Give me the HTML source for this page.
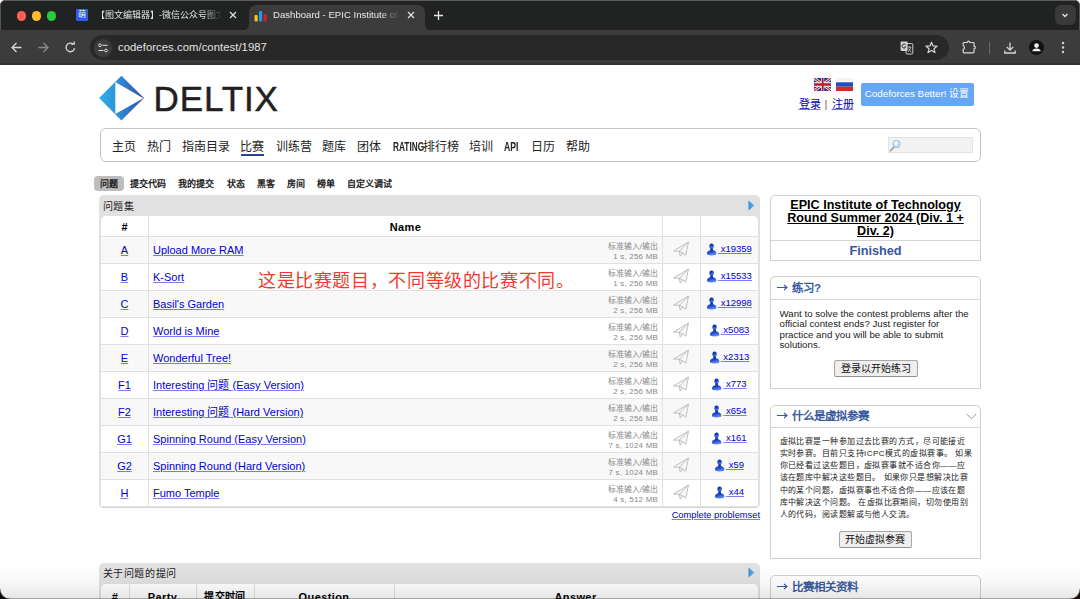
<!DOCTYPE html>
<html lang="zh-CN"><head><meta charset="utf-8">
<style>
*{box-sizing:border-box;margin:0;padding:0}
html,body{width:1080px;height:599px;overflow:hidden;background:#fff;font-family:"Liberation Sans",sans-serif}
.abs{position:absolute}
#chrome{position:absolute;left:0;top:0;width:1080px;height:65px;background:#202322;border-top:1px solid #5c5c5c;border-left:1px solid #555;border-right:1px solid #555;border-radius:5px 5px 0 0}
#toolbar{position:absolute;left:0;top:30px;width:1080px;height:36px;background:#3c3c3c;border-bottom:1px solid #7d7d7d;box-shadow:inset 0 -2px 0 #333}
.dot{position:absolute;top:10px;width:9.5px;height:9.5px;border-radius:50%}
#page{position:absolute;left:0;top:65px;width:1080px;height:534px;background:#fff;overflow:hidden}
a{color:#0000d4;text-decoration:underline;text-decoration-color:rgba(40,40,220,0.6)}
.tabtitle{font-size:9.6px;line-height:14px;white-space:nowrap;overflow:hidden}
/*PAGECSS*/
.nav>span{position:absolute;white-space:nowrap}
.nav{font-size:12px;line-height:14px;color:#222;left:0;top:0}
.cond{display:inline-block;transform:scaleX(0.66);transform-origin:0 50%;white-space:nowrap;overflow:visible}
.menu2 span{position:absolute;white-space:nowrap}
.menu2{font-size:9px;line-height:12px;font-weight:bold;color:#222;left:0}
.prow{position:absolute;left:101px;width:656.5px;height:27px;border-top:1px solid #e1e1e1}
.prow>div{position:absolute;top:0;height:26px}
.pid{left:0;width:47px;text-align:center;font-size:11px;line-height:26px}
.pname{left:52px;width:500px;font-size:11px;line-height:26px;white-space:nowrap}
.plim{left:480px;width:77px;text-align:right;color:#888;font-size:7.9px;line-height:9.8px;padding-top:5px;white-space:nowrap}
.l2{letter-spacing:0.25px}
.pplane{left:571px;width:18px;top:4px !important}
.pcnt{left:599px;width:58px;text-align:center;font-size:9.5px;line-height:23px;white-space:nowrap}
.uic{display:inline-block;vertical-align:middle;position:relative;top:3px;margin-right:1px}
.phead>div{position:absolute;top:0.8px;height:20px;line-height:20px;text-align:center;font-size:11px;color:#000;letter-spacing:0.4px}
.phead{left:0}
.vline{width:1px;background:#e1e1e1}
.sbox{left:770px;width:211px;border:1px solid #cfcfcf;border-radius:5px 5px 0 0;background:#fff}
.stitle{left:777px;font-size:11.5px;line-height:14px;font-weight:bold;color:#3b5a9e;white-space:nowrap}
.btn{background:#efefef;border:1px solid #a6a6a6;border-bottom-color:#8f8f8f;border-radius:2.5px;font-size:10px;line-height:15.4px;text-align:center;color:#111;white-space:nowrap}
/*ENDPAGECSS*/</style></head><body>
<div id="chrome">
  <div class="dot" style="left:15.5px;background:#fe5f57"></div>
  <div class="dot" style="left:30.5px;background:#febc2e"></div>
  <div class="dot" style="left:45.5px;background:#28c840"></div>
  <!-- inactive tab -->
  <div class="abs" style="left:74.5px;top:7.5px;width:12px;height:12px;background:#2f5bf0;border-radius:1px;color:#fff;font-size:8px;line-height:12px;text-align:center">萌</div>
  <div class="abs tabtitle" style="left:95px;top:6.5px;width:126px;font-size:9px;color:#e2e2e2;-webkit-mask-image:linear-gradient(90deg,#000 85%,transparent)">【图文编辑器】-微信公众号图文</div>
  <svg class="abs" style="left:227px;top:8.5px" width="10" height="10" viewBox="0 0 10 10"><path d="M2 2L8 8M8 2L2 8" stroke="#e3e3e3" stroke-width="1.2"/></svg>
  <!-- active tab -->
  <svg class="abs" style="left:239.5px;top:4px" width="192" height="26" viewBox="0 0 192 26"><path d="M0 26 Q8 26 8 18 L8 8 Q8 0 16 0 L176 0 Q184 0 184 8 L184 18 Q184 26 192 26 Z" fill="#3c3c3c"/></svg>
  <svg class="abs" style="left:253px;top:8.5px" width="14" height="12" viewBox="0 0 14 12"><rect x="0.5" y="5" width="3.2" height="6.5" rx="0.8" fill="#f5c518"/><rect x="5" y="1" width="3.2" height="10.5" rx="0.8" fill="#1e9ae6"/><rect x="9.5" y="4" width="3.2" height="7.5" rx="0.8" fill="#d3202a"/></svg>
  <div class="abs tabtitle" style="left:272px;top:7px;width:126px;color:#e8e8e8;-webkit-mask-image:linear-gradient(90deg,#000 86%,transparent 100%)">Dashboard - EPIC Institute of</div>
  <svg class="abs" style="left:405px;top:9px" width="10" height="10" viewBox="0 0 10 10"><path d="M2 2L8 8M8 2L2 8" stroke="#e3e3e3" stroke-width="1.2"/></svg>
  <svg class="abs" style="left:431.5px;top:8.5px" width="11" height="11" viewBox="0 0 11 11"><path d="M5.5 1V10M1 5.5H10" stroke="#e3e3e3" stroke-width="1.3"/></svg>
  <!-- tab list button -->
  <div class="abs" style="left:1054px;top:3.5px;width:20.5px;height:20.5px;border-radius:6px;background:#3a3a3a"></div>
  <svg class="abs" style="left:1059px;top:9px" width="10" height="10" viewBox="0 0 10 10"><path d="M2.5 4L5 6.5L7.5 4" stroke="#e3e3e3" stroke-width="1.3" fill="none"/></svg>
</div>
<div id="toolbar">
  <svg class="abs" style="left:10px;top:11px" width="13" height="13" viewBox="0 0 13 13"><path d="M11.5 6.5H2M6.5 2L2 6.5L6.5 11" stroke="#d6d6d6" stroke-width="1.3" fill="none"/></svg>
  <svg class="abs" style="left:37px;top:11px" width="13" height="13" viewBox="0 0 13 13"><path d="M1.5 6.5H11M6.5 2L11 6.5L6.5 11" stroke="#8a8a8a" stroke-width="1.3" fill="none"/></svg>
  <svg class="abs" style="left:64px;top:11px" width="13" height="13" viewBox="0 0 13 13"><path d="M10.6 7.2A4.3 4.3 0 1 1 9.3 3.3" stroke="#d6d6d6" stroke-width="1.3" fill="none"/><path d="M7.2 3.2H10.2V0.4" stroke="#d6d6d6" stroke-width="1.3" fill="none"/></svg>
  <div class="abs" style="left:90px;top:5px;width:858.5px;height:25px;border-radius:12.5px;background:#282828"></div>
  <div class="abs" style="left:94px;top:9px;width:17.5px;height:17.5px;border-radius:50%;background:#3c3c3c"></div>
  <svg class="abs" style="left:97px;top:12px" width="12" height="12" viewBox="0 0 12 12"><circle cx="3" cy="3.3" r="1.4" stroke="#d6d6d6" stroke-width="1" fill="none"/><path d="M5.5 3.3H10.5" stroke="#d6d6d6" stroke-width="1.1"/><circle cx="9" cy="8.5" r="1.4" stroke="#d6d6d6" stroke-width="1" fill="none"/><path d="M1.5 8.5H6.5" stroke="#d6d6d6" stroke-width="1.1"/></svg>
  <div class="abs" style="left:118px;top:10px;font-size:11.3px;line-height:15px;color:#e3e3e3;letter-spacing:0.05px">codeforces.com/contest/1987</div>
  <!-- translate -->
  <svg class="abs" style="left:900px;top:11px" width="14" height="14" viewBox="0 0 14 14"><rect x="6" y="2.6" width="6.8" height="10.4" rx="1" fill="#282828" stroke="#cfcfcf" stroke-width="1"/><path d="M7.8 6.2H11.2M9.5 5.2V6.2M10.8 6.2Q10 9.5 7.8 11M8.6 7.6Q9.6 10 11.4 11" stroke="#cfcfcf" stroke-width="0.8" fill="none"/><rect x="0.6" y="0.4" width="7" height="9.6" rx="1" fill="#d4d4d4"/><path d="M5.6 3.8A2 2 0 1 0 5.8 6H4.3" stroke="#2a2a2a" stroke-width="1" fill="none"/></svg>
  <svg class="abs" style="left:924.5px;top:11px" width="13" height="13" viewBox="0 0 13 13"><path d="M6.5 1.2L8 5L12 5.2L8.9 7.7L10 11.6L6.5 9.4L3 11.6L4.1 7.7L1 5.2L5 5Z" stroke="#d6d6d6" stroke-width="1.2" fill="none" stroke-linejoin="round"/></svg>
  <svg class="abs" style="left:961px;top:10px" width="16" height="15" viewBox="0 0 16 15"><path d="M3 2.5H6.2A1.3 1.3 0 0 1 8.8 2.5H12.2Q13 2.5 13 3.3V6.2A1.3 1.3 0 0 1 13 8.8V12Q13 12.8 12.2 12.8H3Q2.2 12.8 2.2 12V9.4A1.9 1.9 0 0 0 2.2 5.8V3.3Q2.2 2.5 3 2.5Z" stroke="#d6d6d6" stroke-width="1.2" fill="none" stroke-linejoin="round"/></svg>
  <div class="abs" style="left:988.5px;top:12px;width:1px;height:12px;background:#6a6a6a"></div>
  <svg class="abs" style="left:1002.5px;top:10.5px" width="14" height="14" viewBox="0 0 14 14"><path d="M7 1.5V9M3.8 6L7 9.2L10.2 6" stroke="#d6d6d6" stroke-width="1.3" fill="none"/><path d="M1.8 9.5V12H12.2V9.5" stroke="#d6d6d6" stroke-width="1.3" fill="none"/></svg>
  <div class="abs" style="left:1029px;top:10px;width:15px;height:15px;border-radius:50%;background:#121212"></div>
  <svg class="abs" style="left:1029px;top:10px" width="15" height="15" viewBox="0 0 15 15"><circle cx="7.5" cy="5.6" r="2.3" fill="#f0f0f0"/><path d="M3.3 11.3Q3.6 8.6 7.5 8.6Q11.4 8.6 11.7 11.3Z" fill="#f0f0f0"/></svg>
  <svg class="abs" style="left:1060px;top:10px" width="6" height="15" viewBox="0 0 6 15"><circle cx="3" cy="3" r="1.2" fill="#d6d6d6"/><circle cx="3" cy="7.5" r="1.2" fill="#d6d6d6"/><circle cx="3" cy="12" r="1.2" fill="#d6d6d6"/></svg>
</div>
<div id="page"></div>

<!-- header -->
<svg class="abs" style="left:98px;top:75px" width="48" height="47" viewBox="98 75 48 47">
 <defs><linearGradient id="lg" x1="99" y1="0" x2="144" y2="0" gradientUnits="userSpaceOnUse"><stop offset="0" stop-color="#2cb3ea"/><stop offset="0.4" stop-color="#2f90d9"/><stop offset="1" stop-color="#3450a6"/></linearGradient></defs>
 <path d="M99.1 97.9L121.4 75.8L144 97.9L121.4 120.5Z" fill="url(#lg)"/>
 <path d="M115.3 82.1L115.3 113.9L143.3 98.2Z" fill="#fff"/>
</svg>
<div class="abs" id="deltix" style="left:153.5px;top:81px;font-size:35px;line-height:35px;color:#231f20;letter-spacing:0.9px;-webkit-text-stroke:0.5px #231f20">DELTIX</div>

<svg class="abs" style="left:813.5px;top:78px" width="17.5" height="13" viewBox="0 0 60 30" preserveAspectRatio="none"><rect width="60" height="30" fill="#233a8c"/><path d="M0 0L60 30M60 0L0 30" stroke="#fff" stroke-width="7"/><path d="M0 0L60 30M60 0L0 30" stroke="#c8102e" stroke-width="3"/><path d="M30 0V30M0 15H60" stroke="#fff" stroke-width="10"/><path d="M30 0V30M0 15H60" stroke="#c8102e" stroke-width="6"/></svg>
<svg class="abs" style="left:835.5px;top:78px" width="17" height="13" viewBox="0 0 17 13"><rect width="17" height="4.4" fill="#f4f4f4"/><rect y="4.3" width="17" height="4.4" fill="#1f4fc0"/><rect y="8.7" width="17" height="4.3" fill="#d42a2a"/></svg>
<div class="abs" style="left:798.5px;top:97px;font-size:11px;line-height:14px;white-space:nowrap"><a style="color:#0000aa">登录</a></div><div class="abs" style="left:824.5px;top:97px;font-size:11px;line-height:14px;color:#666">|</div><div class="abs" style="left:831.5px;top:97px;font-size:11px;line-height:14px;white-space:nowrap"><a style="color:#0000aa">注册</a></div>
<div class="abs" style="left:860.5px;top:83px;width:113px;height:22.5px;background:#65a7f6;border-radius:2px;color:#fff;font-size:9.8px;line-height:22.5px;text-align:center;white-space:nowrap">Codeforces Better! 设置</div>

<!-- nav -->
<div class="abs" style="left:99.5px;top:128px;height:33.8px;border:1px solid #c4c4c4;border-radius:6px;width:881.5px"></div>
<div class="abs nav" style="top:140px">
 <span style="left:112px">主页</span><span style="left:147px">热门</span><span style="left:182px">指南目录</span><span style="left:240px">比赛</span><span style="left:275.5px">训练营</span><span style="left:321.5px">题库</span><span style="left:357px">团体</span><span style="left:392.5px"><span class="cond" style="width:30.5px;font-weight:bold;transform:scaleX(0.69)">RATING</span>排行榜</span><span style="left:469px">培训</span><span style="left:503.5px"><span class="cond" style="width:14px;font-weight:bold;transform:scaleX(0.72)">API</span></span><span style="left:531px">日历</span><span style="left:565.5px">帮助</span>
</div>
<div class="abs" style="left:241px;top:154px;width:23px;height:2px;background:#26468f"></div>
<div class="abs" style="left:888px;top:137px;width:85px;height:15.5px;background:#f2f2f2;border:1px solid #e2e2e2"></div>
<svg class="abs" style="left:889px;top:139px" width="13" height="13" viewBox="0 0 13 13"><defs><radialGradient id="mg" cx="0.4" cy="0.35" r="0.7"><stop offset="0" stop-color="#ffffff"/><stop offset="1" stop-color="#a9d4f0"/></radialGradient></defs><path d="M5 8L1.5 11.8" stroke="#9a9a9a" stroke-width="1.6" stroke-linecap="round"/><circle cx="7.5" cy="5" r="3.6" fill="url(#mg)" stroke="#8fb3c8" stroke-width="0.8"/></svg>

<!-- second menu -->
<div class="abs" style="left:94px;top:175.7px;width:30px;height:15px;background:#bdbdbd;border-radius:4px"></div>
<div class="abs menu2" style="top:178px">
 <span style="left:99.5px">问题</span><span style="left:129.5px">提交代码</span><span style="left:178px">我的提交</span><span style="left:226.5px">状态</span><span style="left:256.5px">黑客</span><span style="left:286.5px">房间</span><span style="left:316.5px">榜单</span><span style="left:347px">自定义调试</span>
</div>

<!-- problems box -->
<div class="abs" style="left:99px;top:195.3px;width:661px;height:312px;background:#e1e1e1;border-radius:5px 5px 5px 5px;box-shadow:0 1px 0 #d6d6d6"></div>
<div class="abs" style="left:102.5px;top:199.5px;font-size:10px;letter-spacing:0.5px;line-height:13px;color:#222">问题集</div>
<svg class="abs" style="left:747.5px;top:199.5px" width="7" height="11" viewBox="0 0 7 11"><defs><linearGradient id="tg" x1="0" y1="0" x2="1" y2="0"><stop offset="0" stop-color="#2f8fe0"/><stop offset="1" stop-color="#6ab8f0"/></linearGradient></defs><path d="M0.5 0.5L6.5 5.5L0.5 10.5Z" fill="url(#tg)"/></svg>
<div class="abs" id="ptable" style="left:101px;top:216px;width:656.5px;height:290px;background:#fff;border-radius:5px 5px 0 0;overflow:hidden">
</div>
<div class="abs phead" style="top:216px">
 <div style="left:101px;width:47.5px;font-weight:bold">#</div>
 <div style="left:148.5px;width:514px;font-weight:bold">Name</div>
</div>
<div class="prow" style="top:236px;background:#f8f8f8"><div class="pid"><a>A</a></div><div class="pname"><a>Upload More RAM</a></div><div class="plim"><div class="l1">标准输入/输出</div><div class="l2">1 s, 256 MB</div></div><div class="pplane"><svg width="18" height="17" viewBox="0 0 18 17"><path d="M16.5 1L1.5 10L7.3 10.3L8.2 15.2L10.6 11.8L13.8 14.2Z" fill="#f7f7f7" stroke="#b9b9b9" stroke-width="0.9" stroke-linejoin="round"/><path d="M16.5 1L7.3 10.3L10.6 11.8" fill="none" stroke="#b9b9b9" stroke-width="0.9"/></svg></div><div class="pcnt"><span class="uic"><svg width="11" height="13" viewBox="0 0 11 13"><defs><linearGradient id="ug" x1="0" y1="0" x2="0.3" y2="1"><stop offset="0" stop-color="#061c8a"/><stop offset="0.55" stop-color="#1d44c8"/><stop offset="1" stop-color="#5a8cf0"/></linearGradient></defs><ellipse cx="5.6" cy="3.2" rx="2.2" ry="2.7" fill="url(#ug)"/><path d="M4.4 5.2L4.2 7.3Q1 8.1 0.9 10.8Q1 12.4 5.7 12.4Q10.4 12.4 10.5 10.8Q10.4 8.1 7.1 7.3L6.8 5.2Z" fill="url(#ug)"/></svg></span><a>&nbsp;x19359</a></div></div>
<div class="prow" style="top:263px;background:#fff"><div class="pid"><a>B</a></div><div class="pname"><a>K-Sort</a></div><div class="plim"><div class="l1">标准输入/输出</div><div class="l2">1 s, 256 MB</div></div><div class="pplane"><svg width="18" height="17" viewBox="0 0 18 17"><path d="M16.5 1L1.5 10L7.3 10.3L8.2 15.2L10.6 11.8L13.8 14.2Z" fill="#f7f7f7" stroke="#b9b9b9" stroke-width="0.9" stroke-linejoin="round"/><path d="M16.5 1L7.3 10.3L10.6 11.8" fill="none" stroke="#b9b9b9" stroke-width="0.9"/></svg></div><div class="pcnt"><span class="uic"><svg width="11" height="13" viewBox="0 0 11 13"><defs><linearGradient id="ug" x1="0" y1="0" x2="0.3" y2="1"><stop offset="0" stop-color="#061c8a"/><stop offset="0.55" stop-color="#1d44c8"/><stop offset="1" stop-color="#5a8cf0"/></linearGradient></defs><ellipse cx="5.6" cy="3.2" rx="2.2" ry="2.7" fill="url(#ug)"/><path d="M4.4 5.2L4.2 7.3Q1 8.1 0.9 10.8Q1 12.4 5.7 12.4Q10.4 12.4 10.5 10.8Q10.4 8.1 7.1 7.3L6.8 5.2Z" fill="url(#ug)"/></svg></span><a>&nbsp;x15533</a></div></div>
<div class="prow" style="top:290px;background:#f8f8f8"><div class="pid"><a>C</a></div><div class="pname"><a>Basil's Garden</a></div><div class="plim"><div class="l1">标准输入/输出</div><div class="l2">2 s, 256 MB</div></div><div class="pplane"><svg width="18" height="17" viewBox="0 0 18 17"><path d="M16.5 1L1.5 10L7.3 10.3L8.2 15.2L10.6 11.8L13.8 14.2Z" fill="#f7f7f7" stroke="#b9b9b9" stroke-width="0.9" stroke-linejoin="round"/><path d="M16.5 1L7.3 10.3L10.6 11.8" fill="none" stroke="#b9b9b9" stroke-width="0.9"/></svg></div><div class="pcnt"><span class="uic"><svg width="11" height="13" viewBox="0 0 11 13"><defs><linearGradient id="ug" x1="0" y1="0" x2="0.3" y2="1"><stop offset="0" stop-color="#061c8a"/><stop offset="0.55" stop-color="#1d44c8"/><stop offset="1" stop-color="#5a8cf0"/></linearGradient></defs><ellipse cx="5.6" cy="3.2" rx="2.2" ry="2.7" fill="url(#ug)"/><path d="M4.4 5.2L4.2 7.3Q1 8.1 0.9 10.8Q1 12.4 5.7 12.4Q10.4 12.4 10.5 10.8Q10.4 8.1 7.1 7.3L6.8 5.2Z" fill="url(#ug)"/></svg></span><a>&nbsp;x12998</a></div></div>
<div class="prow" style="top:317px;background:#fff"><div class="pid"><a>D</a></div><div class="pname"><a>World is Mine</a></div><div class="plim"><div class="l1">标准输入/输出</div><div class="l2">2 s, 256 MB</div></div><div class="pplane"><svg width="18" height="17" viewBox="0 0 18 17"><path d="M16.5 1L1.5 10L7.3 10.3L8.2 15.2L10.6 11.8L13.8 14.2Z" fill="#f7f7f7" stroke="#b9b9b9" stroke-width="0.9" stroke-linejoin="round"/><path d="M16.5 1L7.3 10.3L10.6 11.8" fill="none" stroke="#b9b9b9" stroke-width="0.9"/></svg></div><div class="pcnt"><span class="uic"><svg width="11" height="13" viewBox="0 0 11 13"><defs><linearGradient id="ug" x1="0" y1="0" x2="0.3" y2="1"><stop offset="0" stop-color="#061c8a"/><stop offset="0.55" stop-color="#1d44c8"/><stop offset="1" stop-color="#5a8cf0"/></linearGradient></defs><ellipse cx="5.6" cy="3.2" rx="2.2" ry="2.7" fill="url(#ug)"/><path d="M4.4 5.2L4.2 7.3Q1 8.1 0.9 10.8Q1 12.4 5.7 12.4Q10.4 12.4 10.5 10.8Q10.4 8.1 7.1 7.3L6.8 5.2Z" fill="url(#ug)"/></svg></span><a>&nbsp;x5083</a></div></div>
<div class="prow" style="top:344px;background:#f8f8f8"><div class="pid"><a>E</a></div><div class="pname"><a>Wonderful Tree!</a></div><div class="plim"><div class="l1">标准输入/输出</div><div class="l2">2 s, 256 MB</div></div><div class="pplane"><svg width="18" height="17" viewBox="0 0 18 17"><path d="M16.5 1L1.5 10L7.3 10.3L8.2 15.2L10.6 11.8L13.8 14.2Z" fill="#f7f7f7" stroke="#b9b9b9" stroke-width="0.9" stroke-linejoin="round"/><path d="M16.5 1L7.3 10.3L10.6 11.8" fill="none" stroke="#b9b9b9" stroke-width="0.9"/></svg></div><div class="pcnt"><span class="uic"><svg width="11" height="13" viewBox="0 0 11 13"><defs><linearGradient id="ug" x1="0" y1="0" x2="0.3" y2="1"><stop offset="0" stop-color="#061c8a"/><stop offset="0.55" stop-color="#1d44c8"/><stop offset="1" stop-color="#5a8cf0"/></linearGradient></defs><ellipse cx="5.6" cy="3.2" rx="2.2" ry="2.7" fill="url(#ug)"/><path d="M4.4 5.2L4.2 7.3Q1 8.1 0.9 10.8Q1 12.4 5.7 12.4Q10.4 12.4 10.5 10.8Q10.4 8.1 7.1 7.3L6.8 5.2Z" fill="url(#ug)"/></svg></span><a>&nbsp;x2313</a></div></div>
<div class="prow" style="top:371px;background:#fff"><div class="pid"><a>F1</a></div><div class="pname"><a>Interesting 问题 (Easy Version)</a></div><div class="plim"><div class="l1">标准输入/输出</div><div class="l2">2 s, 256 MB</div></div><div class="pplane"><svg width="18" height="17" viewBox="0 0 18 17"><path d="M16.5 1L1.5 10L7.3 10.3L8.2 15.2L10.6 11.8L13.8 14.2Z" fill="#f7f7f7" stroke="#b9b9b9" stroke-width="0.9" stroke-linejoin="round"/><path d="M16.5 1L7.3 10.3L10.6 11.8" fill="none" stroke="#b9b9b9" stroke-width="0.9"/></svg></div><div class="pcnt"><span class="uic"><svg width="11" height="13" viewBox="0 0 11 13"><defs><linearGradient id="ug" x1="0" y1="0" x2="0.3" y2="1"><stop offset="0" stop-color="#061c8a"/><stop offset="0.55" stop-color="#1d44c8"/><stop offset="1" stop-color="#5a8cf0"/></linearGradient></defs><ellipse cx="5.6" cy="3.2" rx="2.2" ry="2.7" fill="url(#ug)"/><path d="M4.4 5.2L4.2 7.3Q1 8.1 0.9 10.8Q1 12.4 5.7 12.4Q10.4 12.4 10.5 10.8Q10.4 8.1 7.1 7.3L6.8 5.2Z" fill="url(#ug)"/></svg></span><a>&nbsp;x773</a></div></div>
<div class="prow" style="top:398px;background:#f8f8f8"><div class="pid"><a>F2</a></div><div class="pname"><a>Interesting 问题 (Hard Version)</a></div><div class="plim"><div class="l1">标准输入/输出</div><div class="l2">2 s, 256 MB</div></div><div class="pplane"><svg width="18" height="17" viewBox="0 0 18 17"><path d="M16.5 1L1.5 10L7.3 10.3L8.2 15.2L10.6 11.8L13.8 14.2Z" fill="#f7f7f7" stroke="#b9b9b9" stroke-width="0.9" stroke-linejoin="round"/><path d="M16.5 1L7.3 10.3L10.6 11.8" fill="none" stroke="#b9b9b9" stroke-width="0.9"/></svg></div><div class="pcnt"><span class="uic"><svg width="11" height="13" viewBox="0 0 11 13"><defs><linearGradient id="ug" x1="0" y1="0" x2="0.3" y2="1"><stop offset="0" stop-color="#061c8a"/><stop offset="0.55" stop-color="#1d44c8"/><stop offset="1" stop-color="#5a8cf0"/></linearGradient></defs><ellipse cx="5.6" cy="3.2" rx="2.2" ry="2.7" fill="url(#ug)"/><path d="M4.4 5.2L4.2 7.3Q1 8.1 0.9 10.8Q1 12.4 5.7 12.4Q10.4 12.4 10.5 10.8Q10.4 8.1 7.1 7.3L6.8 5.2Z" fill="url(#ug)"/></svg></span><a>&nbsp;x654</a></div></div>
<div class="prow" style="top:425px;background:#fff"><div class="pid"><a>G1</a></div><div class="pname"><a>Spinning Round (Easy Version)</a></div><div class="plim"><div class="l1">标准输入/输出</div><div class="l2">7 s, 1024 MB</div></div><div class="pplane"><svg width="18" height="17" viewBox="0 0 18 17"><path d="M16.5 1L1.5 10L7.3 10.3L8.2 15.2L10.6 11.8L13.8 14.2Z" fill="#f7f7f7" stroke="#b9b9b9" stroke-width="0.9" stroke-linejoin="round"/><path d="M16.5 1L7.3 10.3L10.6 11.8" fill="none" stroke="#b9b9b9" stroke-width="0.9"/></svg></div><div class="pcnt"><span class="uic"><svg width="11" height="13" viewBox="0 0 11 13"><defs><linearGradient id="ug" x1="0" y1="0" x2="0.3" y2="1"><stop offset="0" stop-color="#061c8a"/><stop offset="0.55" stop-color="#1d44c8"/><stop offset="1" stop-color="#5a8cf0"/></linearGradient></defs><ellipse cx="5.6" cy="3.2" rx="2.2" ry="2.7" fill="url(#ug)"/><path d="M4.4 5.2L4.2 7.3Q1 8.1 0.9 10.8Q1 12.4 5.7 12.4Q10.4 12.4 10.5 10.8Q10.4 8.1 7.1 7.3L6.8 5.2Z" fill="url(#ug)"/></svg></span><a>&nbsp;x161</a></div></div>
<div class="prow" style="top:452px;background:#f8f8f8"><div class="pid"><a>G2</a></div><div class="pname"><a>Spinning Round (Hard Version)</a></div><div class="plim"><div class="l1">标准输入/输出</div><div class="l2">7 s, 1024 MB</div></div><div class="pplane"><svg width="18" height="17" viewBox="0 0 18 17"><path d="M16.5 1L1.5 10L7.3 10.3L8.2 15.2L10.6 11.8L13.8 14.2Z" fill="#f7f7f7" stroke="#b9b9b9" stroke-width="0.9" stroke-linejoin="round"/><path d="M16.5 1L7.3 10.3L10.6 11.8" fill="none" stroke="#b9b9b9" stroke-width="0.9"/></svg></div><div class="pcnt"><span class="uic"><svg width="11" height="13" viewBox="0 0 11 13"><defs><linearGradient id="ug" x1="0" y1="0" x2="0.3" y2="1"><stop offset="0" stop-color="#061c8a"/><stop offset="0.55" stop-color="#1d44c8"/><stop offset="1" stop-color="#5a8cf0"/></linearGradient></defs><ellipse cx="5.6" cy="3.2" rx="2.2" ry="2.7" fill="url(#ug)"/><path d="M4.4 5.2L4.2 7.3Q1 8.1 0.9 10.8Q1 12.4 5.7 12.4Q10.4 12.4 10.5 10.8Q10.4 8.1 7.1 7.3L6.8 5.2Z" fill="url(#ug)"/></svg></span><a>&nbsp;x59</a></div></div>
<div class="prow" style="top:479px;background:#fff"><div class="pid"><a>H</a></div><div class="pname"><a>Fumo Temple</a></div><div class="plim"><div class="l1">标准输入/输出</div><div class="l2">4 s, 512 MB</div></div><div class="pplane"><svg width="18" height="17" viewBox="0 0 18 17"><path d="M16.5 1L1.5 10L7.3 10.3L8.2 15.2L10.6 11.8L13.8 14.2Z" fill="#f7f7f7" stroke="#b9b9b9" stroke-width="0.9" stroke-linejoin="round"/><path d="M16.5 1L7.3 10.3L10.6 11.8" fill="none" stroke="#b9b9b9" stroke-width="0.9"/></svg></div><div class="pcnt"><span class="uic"><svg width="11" height="13" viewBox="0 0 11 13"><defs><linearGradient id="ug" x1="0" y1="0" x2="0.3" y2="1"><stop offset="0" stop-color="#061c8a"/><stop offset="0.55" stop-color="#1d44c8"/><stop offset="1" stop-color="#5a8cf0"/></linearGradient></defs><ellipse cx="5.6" cy="3.2" rx="2.2" ry="2.7" fill="url(#ug)"/><path d="M4.4 5.2L4.2 7.3Q1 8.1 0.9 10.8Q1 12.4 5.7 12.4Q10.4 12.4 10.5 10.8Q10.4 8.1 7.1 7.3L6.8 5.2Z" fill="url(#ug)"/></svg></span><a>&nbsp;x44</a></div></div>
<div class="abs vline" style="left:148px;top:216px;height:290px"></div>
<div class="abs vline" style="left:662px;top:216px;height:290px"></div>
<div class="abs vline" style="left:700px;top:216px;height:290px"></div>
<div class="abs" style="left:660px;top:509px;width:100px;text-align:right;font-size:9.3px;line-height:13px"><a>Complete problemset</a></div>

<!-- annotation -->
<div class="abs" style="left:258px;top:270px;font-size:18px;letter-spacing:0.62px;line-height:22px;color:#ef3b2d;white-space:nowrap">这是比赛题目，不同等级的比赛不同。</div>

<!-- sidebar -->
<div class="abs sbox" style="top:195.3px;height:65.5px"></div>
<div class="abs" style="left:771px;top:199.2px;width:209px;text-align:center;font-size:12.6px;line-height:12.7px;font-weight:bold;color:#000;text-decoration:underline">EPIC Institute of Technology<br>Round Summer 2024 (Div. 1 +<br>Div. 2)</div>
<div class="abs" style="left:771px;top:240px;width:209px;height:1px;background:#d6d6d6"></div>
<div class="abs" style="left:771px;top:243.5px;width:209px;text-align:center;font-size:12.7px;line-height:15px;font-weight:bold;color:#37569a">Finished</div>

<div class="abs sbox" style="top:276.4px;height:112.5px"></div>
<div class="abs stitle" style="top:281px"><svg width="11" height="7" viewBox="0 0 11 7" style="vertical-align:middle;margin-right:4px;margin-top:-2px"><path d="M0 3.5H10M7 1L10 3.5L7 6" stroke="#3b5a9e" stroke-width="1.1" fill="none"/></svg>练习?</div>
<div class="abs" style="left:771px;top:298.5px;width:209px;height:1px;background:#d6d6d6"></div>
<div class="abs" style="left:779.5px;top:308.6px;width:200px;font-size:9.7px;line-height:10.5px;color:#222">Want to solve the contest problems after the<br>official contest ends? Just register for<br>practice and you will be able to submit<br>solutions.</div>
<div class="abs btn" style="left:834px;top:360px;width:83.5px;height:17.2px">登录以开始练习</div>

<div class="abs sbox" style="top:404.5px;height:154.5px"></div>
<div class="abs stitle" style="top:409px"><svg width="11" height="7" viewBox="0 0 11 7" style="vertical-align:middle;margin-right:4px;margin-top:-2px"><path d="M0 3.5H10M7 1L10 3.5L7 6" stroke="#3b5a9e" stroke-width="1.1" fill="none"/></svg>什么是虚拟参赛</div>
<svg class="abs" style="left:966px;top:412.5px" width="11" height="7" viewBox="0 0 11 7"><path d="M0.7 0.8L5.5 5.8L10.3 0.8" stroke="#9a9a9a" stroke-width="1" fill="none"/></svg>
<div class="abs" style="left:771px;top:426.5px;width:209px;height:1px;background:#d6d6d6"></div>
<div class="abs" style="left:779.5px;top:436px;width:200px;font-size:8px;letter-spacing:0.45px;line-height:12.15px;color:#222;white-space:nowrap">虚拟比赛是一种参加过去比赛的方式，尽可能接近<br>实时参赛。目前只支持ICPC模式的虚拟赛事。 如果<br>你已经看过这些题目，虚拟赛事就不适合你——应<br>该在题库中解决这些题目。 如果你只是想解决比赛<br>中的某个问题，虚拟赛事也不适合你——应该在题<br>库中解决这个问题。 在虚拟比赛期间，切勿使用别<br>人的代码，阅读题解或与他人交流。</div>
<div class="abs btn" style="left:839px;top:531px;width:72.5px;height:17px">开始虚拟参赛</div>

<div class="abs sbox" style="top:575px;height:40px"></div>
<div class="abs stitle" style="top:579.5px"><svg width="11" height="7" viewBox="0 0 11 7" style="vertical-align:middle;margin-right:4px;margin-top:-2px"><path d="M0 3.5H10M7 1L10 3.5L7 6" stroke="#3b5a9e" stroke-width="1.1" fill="none"/></svg>比赛相关资料</div>

<!-- bottom box -->
<div class="abs" style="left:99px;top:563px;width:661px;height:60px;background:#e1e1e1;border-radius:5px"></div>
<div class="abs" style="left:102.5px;top:566.5px;font-size:10px;letter-spacing:0.65px;line-height:13px;color:#222">关于问题的提问</div>
<svg class="abs" style="left:747.5px;top:567px" width="7" height="11" viewBox="0 0 7 11"><path d="M0.5 0.5L6.5 5.5L0.5 10.5Z" fill="url(#tg)"/></svg>
<div class="abs" style="left:101px;top:584px;width:656.5px;height:40px;background:#fff;border-radius:5px 5px 0 0"></div>
<div class="abs vline" style="left:129px;top:584px;height:20px"></div>
<div class="abs vline" style="left:196px;top:584px;height:20px"></div>
<div class="abs vline" style="left:254px;top:584px;height:20px"></div>
<div class="abs vline" style="left:394px;top:584px;height:20px"></div>
<div class="abs phead" style="top:586px">
 <div style="left:101px;width:28px;font-weight:bold">#</div>
 <div style="left:129px;width:67px;font-weight:bold">Party</div>
 <div style="left:196px;width:58px;font-weight:bold;font-size:10px">提交时间</div>
 <div style="left:254px;width:140px;font-weight:bold">Question</div>
 <div style="left:394px;width:363px;font-weight:bold">Answer</div>
</div>
<div class="abs" style="left:0;top:566px;width:1080px;height:33px;background:linear-gradient(180deg,rgba(0,0,0,0),rgba(0,0,0,0.04) 60%,rgba(0,0,0,0.1));pointer-events:none"></div>
<div class="abs" style="left:0;top:598px;width:1080px;height:1px;background:rgba(0,0,0,0.28)"></div>
<div class="abs" style="left:0;top:589px;width:10px;height:10px;background:radial-gradient(circle at 10px 0px,rgba(0,0,0,0) 9px,#06080c 10.5px)"></div>
<div class="abs" style="left:1070px;top:589px;width:10px;height:10px;background:radial-gradient(circle at 0px 0px,rgba(0,0,0,0) 9px,#1a0c0a 10.5px)"></div>
</body></html>
